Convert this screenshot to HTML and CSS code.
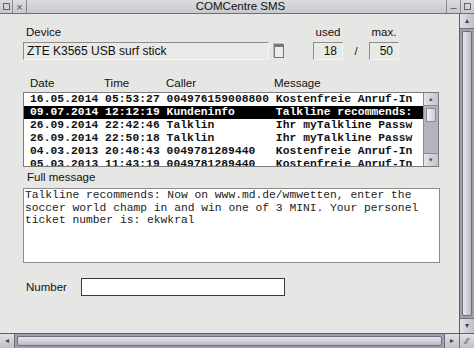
FILE: index.html
```html
<!DOCTYPE html>
<html lang="en">
<head>
    <meta charset="UTF-8">
    <title>COMCentre SMS</title>
    <link rel="stylesheet" href="styles.css">
</head>
<body>
    <div class="window">
        <div class="titlebar">
            <div class="tb-btn back"><span class="back-box"></span></div>
            <div class="tb-btn close">×</div>
            <div class="title">COMCentre SMS</div>
            <div class="tb-btn iconise">–</div>
            <div class="tb-btn toggle"><span class="toggle-box"></span></div>
        </div>

        <div class="middle">
            <div class="content">
                <div class="top-row">
                    <div class="device-group">
                        <div class="label">Device</div>
                        <div class="device-line">
                            <div class="field device-field">ZTE K3565 USB surf stick</div>
                            <div class="menu-icon"><span></span></div>
                        </div>
                    </div>
                    <div class="count-group">
                        <div class="label centered">used</div>
                        <div class="field count-field">18</div>
                    </div>
                    <div class="slash">/</div>
                    <div class="count-group">
                        <div class="label centered">max.</div>
                        <div class="field count-field">50</div>
                    </div>
                </div>

                <div class="list-head">
                    <span class="col-date">Date</span>
                    <span class="col-time">Time</span>
                    <span class="col-caller">Caller</span>
                    <span>Message</span>
                </div>
                <div class="list">
                    <div class="rows">
                        <div class="row">16.05.2014 05:53:27 004976159008800 Kostenfreie Anruf-In</div>
                        <div class="row selected">09.07.2014 12:12:19 Kundeninfo      Talkline recommends:</div>
                        <div class="row">26.09.2014 22:42:46 Talklin         Ihr myTalkline Passw</div>
                        <div class="row">26.09.2014 22:50:18 Talklin         Ihr myTalkline Passw</div>
                        <div class="row">04.03.2013 20:48:43 0049781289440   Kostenfreie Anruf-In</div>
                        <div class="row">05.03.2013 11:43:19 0049781289440   Kostenfreie Anruf-In</div>
                    </div>
                    <div class="list-scroll">
                        <div class="ls-arrow">▴</div>
                        <div class="ls-well"><div class="ls-thumb"></div></div>
                        <div class="ls-arrow">▾</div>
                    </div>
                </div>

                <div class="label full-label">Full message</div>
                <div class="message">Talkline recommends: Now on www.md.de/wmwetten, enter the
soccer world champ in and win one of 3 MINI. Your personel
ticket number is: ekwkral</div>

                <div class="number-row">
                    <div class="label number-label">Number</div>
                    <div class="number-input"></div>
                </div>
            </div>

            <div class="vscroll">
                <div class="sb-arrow">▴</div>
                <div class="sb-well"><div class="sb-thumb v"></div></div>
                <div class="sb-arrow">▾</div>
            </div>
        </div>

        <div class="hscroll">
            <div class="sb-arrow h">◂</div>
            <div class="sb-well h"><div class="sb-thumb h"></div></div>
            <div class="sb-arrow h">▸</div>
            <div class="resize">⁄⁄</div>
        </div>
    </div>
</body>
</html>
```

FILE: styles.css
```css
body {
    margin: 0;
    font-family: "Liberation Sans", Arial, sans-serif;
    color: #111;
}

.window {
    width: 474px;
    height: 348px;
    display: flex;
    flex-direction: column;
    background: #e6e6e4;
    overflow: hidden;
}

/* title bar */

.titlebar {
    height: 13px;
    display: flex;
    background: linear-gradient(#dcdce0, #c8c8ce);
    border-bottom: 1px solid #6e6e78;
    font-size: 11.5px;
}

.tb-btn {
    width: 12px;
    display: flex;
    align-items: center;
    justify-content: center;
    border-right: 1px solid #8a8a94;
    color: #555;
    font-size: 11px;
}

.tb-btn.close {
    width: 13px;
}

.tb-btn.iconise,
.tb-btn.toggle {
    border-right: none;
    border-left: 1px solid #8a8a94;
    width: 13px;
}

.back-box,
.toggle-box {
    width: 5px;
    height: 5px;
    border: 1px solid #666;
}

.title {
    flex: 1;
    text-align: center;
    line-height: 13px;
    padding-left: 8px;
}

/* main area */

.middle {
    flex: 1;
    display: flex;
    min-height: 0;
}

.content {
    flex: 1;
    padding: 11px 0 0 23px;
    font-size: 11.5px;
}

.label {
    height: 14px;
    line-height: 14px;
    padding-left: 3px;
}

.label.centered {
    padding-left: 0;
    text-align: center;
}

.field {
    height: 16px;
    line-height: 16px;
    border: 1px solid;
    border-color: #8c8c8c #f4f4f4 #f4f4f4 #8c8c8c;
    background: #e9e9e7;
}

.top-row {
    display: flex;
    align-items: flex-end;
}

.device-group {
    width: 264px;
}

.device-line {
    display: flex;
    margin-top: 3px;
}

.device-field {
    width: 241px;
    padding-left: 3px;
    font-size: 12px;
}

.menu-icon {
    width: 17px;
    height: 18px;
    margin-left: 1px;
    display: flex;
    align-items: center;
    justify-content: center;
}

.menu-icon span {
    width: 8px;
    height: 10px;
    border: 1px solid #777;
    border-top-width: 3px;
    background: #ececea;
    box-shadow: -1px -1px 0 #bbb;
}

.count-group {
    width: 30px;
    margin-left: 26px;
}

.count-group .field {
    margin-top: 3px;
}

.count-field {
    text-align: right;
    padding-right: 5px;
    font-size: 12px;
}

.slash {
    width: 26px;
    margin-right: -26px;
    margin-left: 0;
    height: 18px;
    line-height: 18px;
    text-align: center;
    position: relative;
    left: 0;
}

.slash + .count-group {
    margin-left: 26px;
}

/* message list */

.list-head {
    margin-top: 16px;
    height: 14px;
    line-height: 14px;
    padding-left: 7px;
    display: flex;
}

.col-date { width: 74px; }
.col-time { width: 62px; }
.col-caller { width: 108px; }

.list {
    margin-top: 2px;
    width: 414px;
    height: 73px;
    border: 1px solid #7c7c7c;
    background: #fff;
    display: flex;
    overflow: hidden;
}

.rows {
    flex: 1;
    overflow: hidden;
    font-family: "Liberation Mono", "Courier New", monospace;
    font-weight: bold;
    font-size: 11.3px;
    letter-spacing: 0.05px;
}

.row {
    height: 13px;
    line-height: 13px;
    padding-left: 6px;
    white-space: pre;
}

.row.selected {
    background: #000;
    color: #fff;
}

.list-scroll {
    width: 14px;
    display: flex;
    flex-direction: column;
    border-left: 1px solid #8a8a94;
    background: #b4b4c0;
}

.ls-arrow {
    height: 12px;
    line-height: 12px;
    text-align: center;
    font-size: 7px;
    color: #555;
    background: linear-gradient(to right, #e2e2e8, #c4c4ce);
    border-bottom: 1px solid #8a8a94;
}

.ls-arrow:last-child {
    border-bottom: none;
    border-top: 1px solid #8a8a94;
}

.ls-well {
    flex: 1;
    padding: 2px 2px;
}

.ls-thumb {
    height: 12px;
    background: linear-gradient(to right, #f0f0f4, #ceced8);
    border: 1px solid #8a8a94;
}

/* full message */

.full-label {
    margin-top: 3px;
    padding-left: 4px;
}

.message {
    margin-top: 4px;
    width: 414px;
    height: 73px;
    border: 1px solid #8c8c8c;
    background: #fff;
    padding-left: 1px;
    font-family: "Liberation Mono", "Courier New", monospace;
    font-size: 11.3px;
    line-height: 12.5px;
    white-space: pre-wrap;
    color: #222;
}

/* number */

.number-row {
    margin-top: 15px;
    display: flex;
    align-items: center;
}

.number-label {
    width: 55px;
}

.number-input {
    width: 202px;
    height: 16px;
    border: 1px solid #3a3a3a;
    background: #fff;
}

/* window scroll bars */

.vscroll {
    width: 14px;
    border-left: 1px solid #5e5e68;
    display: flex;
    flex-direction: column;
    background: #9e9eac;
}

.sb-arrow {
    height: 14px;
    line-height: 14px;
    text-align: center;
    font-size: 8px;
    color: #444;
    background: linear-gradient(to right, #e0e0e6, #c0c0ca);
    border-bottom: 1px solid #6e6e78;
}

.vscroll .sb-arrow:last-child {
    border-bottom: none;
    border-top: 1px solid #6e6e78;
}

.sb-well {
    flex: 1;
    padding: 2px 2px;
}

.sb-thumb.v {
    height: 100%;
    box-sizing: border-box;
    background: linear-gradient(to right, #e8e8ee, #bcbcc8);
    border: 1px solid #6e6e78;
    border-radius: 2px;
}

.hscroll {
    height: 14px;
    border-top: 1px solid #5e5e68;
    display: flex;
    background: #9e9eac;
}

.sb-arrow.h {
    width: 14px;
    height: 14px;
    border-bottom: none;
    border-right: 1px solid #6e6e78;
    background: linear-gradient(#e0e0e6, #c0c0ca);
}

.sb-arrow.h:nth-child(3) {
    border-right: 1px solid #6e6e78;
    border-left: 1px solid #6e6e78;
}

.sb-well.h {
    padding: 2px 2px;
}

.sb-thumb.h {
    height: 100%;
    box-sizing: border-box;
    background: linear-gradient(#e8e8ee, #bcbcc8);
    border: 1px solid #6e6e78;
    border-radius: 2px;
}

.resize {
    width: 14px;
    line-height: 14px;
    text-align: center;
    font-size: 9px;
    color: #444;
    background: linear-gradient(#e0e0e6, #c0c0ca);
}
```
